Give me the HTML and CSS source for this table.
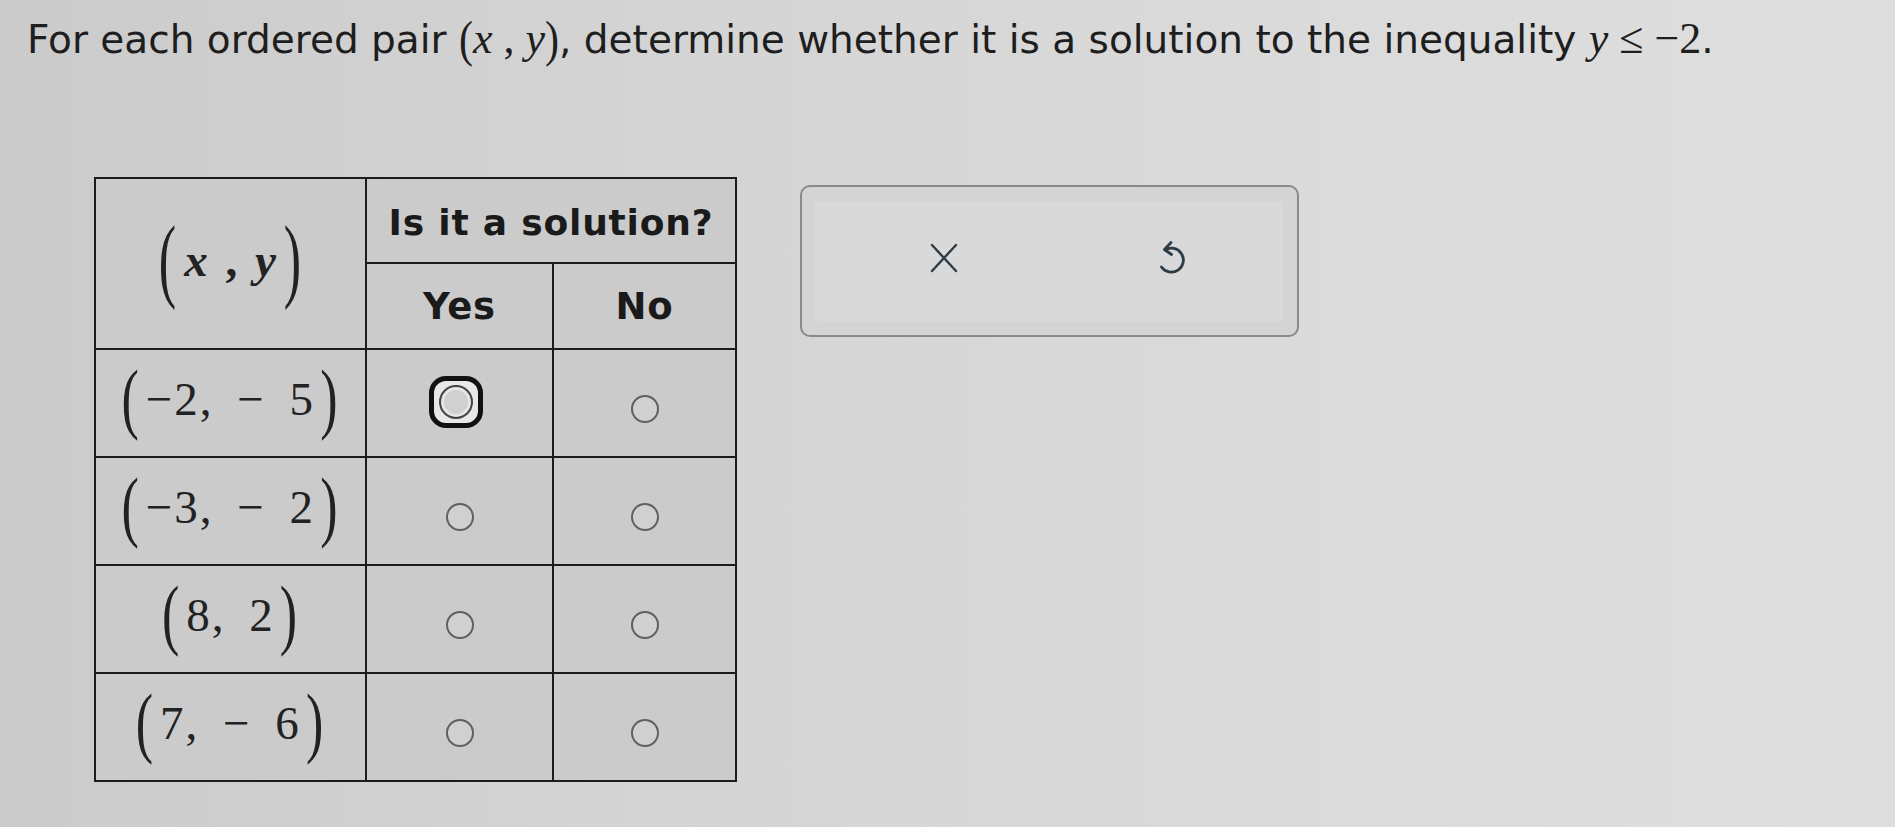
FILE: index.html
```html
<!DOCTYPE html>
<html>
<head>
<meta charset="utf-8">
<link rel="stylesheet" href="styles.css">
</head>
<body>
<div class="page">
  <p class="prompt">For each ordered pair <span class="math"><span class="paren">(</span><i>x</i> , <i>y</i><span class="paren">)</span></span>, determine whether it is a solution to the inequality <span class="math"><i>y</i> ≤ −2</span>.</p>
  <div class="work">
    <table class="grid">
      <tr class="hrow1">
        <th rowspan="2" class="pair-h"><span class="m"><span class="bp">(</span><i>x</i> , <i>y</i><span class="bp">)</span></span></th>
        <th colspan="2" class="q">Is it a solution?</th>
      </tr>
      <tr class="hrow2">
        <th class="yn">Yes</th>
        <th class="yn">No</th>
      </tr>
      <tr class="row">
        <td class="pair"><span class="m"><span class="bp">(</span>−2, − 5<span class="bp">)</span></span></td>
        <td class="opt"><span class="focus"><span class="radio"></span></span></td>
        <td class="opt"><span class="radio"></span></td>
      </tr>
      <tr class="row">
        <td class="pair"><span class="m"><span class="bp">(</span>−3, − 2<span class="bp">)</span></span></td>
        <td class="opt"><span class="radio"></span></td>
        <td class="opt"><span class="radio"></span></td>
      </tr>
      <tr class="row">
        <td class="pair"><span class="m"><span class="bp">(</span>8, 2<span class="bp">)</span></span></td>
        <td class="opt"><span class="radio"></span></td>
        <td class="opt"><span class="radio"></span></td>
      </tr>
      <tr class="row">
        <td class="pair"><span class="m"><span class="bp">(</span>7, − 6<span class="bp">)</span></span></td>
        <td class="opt"><span class="radio"></span></td>
        <td class="opt"><span class="radio"></span></td>
      </tr>
    </table>
    <div class="panel">
      <div class="panel-inner">
        <button class="btn" aria-label="Clear">
          <svg width="32" height="34" viewBox="0 0 32 34"><path d="M4 4 L28 30 M28 4 L4 30" stroke="#2e3c46" stroke-width="2.4" fill="none" stroke-linecap="round"/></svg>
        </button>
        <button class="btn" aria-label="Undo">
          <svg width="32" height="40" viewBox="0 0 32 40"><path d="M9 12 A12 12 0 1 1 5.5 29" stroke="#2e3c46" stroke-width="2.8" fill="none" stroke-linecap="round"/><path d="M15 4.5 L8.5 11.5 L15.5 16.5" stroke="#2e3c46" stroke-width="2.8" fill="none" stroke-linecap="round" stroke-linejoin="round"/></svg>
        </button>
      </div>
    </div>
  </div>
</div>
</body>
</html>
```

FILE: styles.css
```css
html, body {
  margin: 0;
  padding: 0;
}
body {
  width: 1895px;
  height: 827px;
  overflow: hidden;
  background: linear-gradient(90deg, #cbcbcb 0%, #d4d4d4 35%, #dbdbdb 70%, #dedede 100%);
  color: #1e1e1e;
  font-family: "DejaVu Sans", sans-serif;
}
.page {
  padding: 14px 0 0 27px;
}
.prompt {
  margin: 0;
  font-size: 39px;
  line-height: 50px;
  white-space: nowrap;
}
.math {
  font-family: "Liberation Serif", serif;
  font-size: 44px;
}
.math .paren {
  display: inline-block;
  transform: scaleY(1.2);
  font-size: 42px;
  font-weight: 300;
}
.work {
  display: flex;
  align-items: flex-start;
  margin-top: 112px;
  margin-left: 67px;
  gap: 63px;
}
.grid {
  border-collapse: collapse;
  background: #cbcbcb;
}
.grid th, .grid td {
  border: 2px solid #1c1c1c;
  padding: 0;
  text-align: center;
}
.hrow1 { height: 85px; }
.hrow2 { height: 86px; }
.row { height: 108px; }
.pair-h, .pair { width: 269px; }
.pair { padding-bottom: 12px !important; }
.pair-h { padding-bottom: 10px !important; }
.grid th.yn, .grid td.opt { width: 185px; }
.grid th.yn + th.yn, .grid td.opt + td.opt { border-left: 1px solid #6a6a6a; width: 181px; }
.opt { padding-top: 12px !important; }
.q, .yn {
  font-family: "DejaVu Sans", sans-serif;
  font-weight: bold;
  font-size: 36px;
  letter-spacing: 0.8px;
  color: #1a1a1a;
}
.yn { font-size: 37px; }
.q { padding-top: 4px !important; }
.m {
  font-family: "Liberation Serif", serif;
  font-size: 47px;
  color: #222;
  white-space: nowrap;
  letter-spacing: 2px;
  word-spacing: 10px;
}
.pair-h .m { font-size: 47px; word-spacing: 4px; letter-spacing: 1px; }
.bp {
  display: inline-block;
  font-size: 52px;
  transform: scaleY(1.5);
  margin: 0 5px;
  font-weight: 300;
}
.pair-h .bp {
  transform: scaleY(1.8);
  margin: 0 7px;
}
.radio {
  display: inline-block;
  width: 28px;
  height: 28px;
  border: 2px solid #606060;
  border-radius: 50%;
  box-sizing: border-box;
  vertical-align: middle;
  background: #d0d0d0;
}
.focus {
  display: inline-flex;
  align-items: center;
  justify-content: center;
  width: 54px;
  height: 52px;
  border: 5px solid #111;
  border-radius: 17px;
  box-sizing: border-box;
  vertical-align: middle;
  background: #e8e8e8;
  margin-top: -14px;
  margin-left: -8px;
}
.focus .radio {
  width: 34px;
  height: 34px;
  border-color: #444;
  box-shadow: inset 0 0 0 3px #e6e6e6;
}
.panel {
  margin-top: 8px;
  width: 499px;
  height: 152px;
  box-sizing: border-box;
  border: 2px solid #8a8a8a;
  border-radius: 10px;
  padding: 14px 14px 14px 12px;
  background: #d4d4d4;
}
.panel-inner {
  height: 100%;
  box-sizing: border-box;
  background: #d9d9d9;
  border-radius: 4px;
  display: flex;
  align-items: center;
  gap: 148px;
  padding: 0 0 6px 90px;
}
.btn {
  border: none;
  background: transparent;
  padding: 0;
  width: 80px;
  height: 60px;
  display: flex;
  align-items: center;
  justify-content: center;
}
```
